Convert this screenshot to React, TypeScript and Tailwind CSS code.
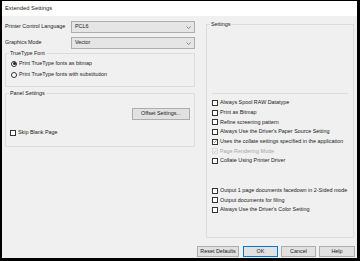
import React from "react";

const font = { fontFamily: '"Liberation Sans", Arial, sans-serif' };

function Combo({ value }: { value: string }) {
  return (
    <div className="w-[124px] h-[12px] border border-[#adadad] bg-[#e5e5e5] flex items-center justify-between pl-[3px] pr-[3px]">
      <span className="text-[5.4px] leading-none text-[#1a1a1a]">{value}</span>
      <svg width="5" height="3" viewBox="0 0 5 3" className="block">
        <polyline points="0.5,0.5 2.5,2.5 4.5,0.5" fill="none" stroke="#606060" strokeWidth="0.7" />
      </svg>
    </div>
  );
}

function Radio({ checked, label }: { checked?: boolean; label: string }) {
  return (
    <div className="h-[10px] flex items-center pl-[5px]">
      <div className="w-[6px] h-[6px] rounded-full border border-[#333] bg-white flex items-center justify-center">
        {checked && <div className="w-[3px] h-[3px] rounded-full bg-[#222]" />}
      </div>
      <span className="ml-[2px] text-[5.4px] leading-none text-[#1a1a1a]">{label}</span>
    </div>
  );
}

function Check({ checked, disabled, label, h = "h-[9.7px]" }: { checked?: boolean; disabled?: boolean; label: string; h?: string }) {
  return (
    <div className={`${h} flex items-center`}>
      <div
        className={`w-[6px] h-[6px] border flex items-center justify-center ${
          disabled ? "border-[#d8d8d8] bg-[#f0f0f0]" : "border-[#333] bg-white"
        }`}
      >
        {checked && (
          <svg width="5" height="5" viewBox="0 0 5 5" className="block">
            <polyline
              points="0.7,2.6 1.9,3.8 4.3,1.0"
              fill="none"
              stroke={disabled ? "#b0b0b0" : "#333"}
              strokeWidth="0.7"
            />
          </svg>
        )}
      </div>
      <span className={`ml-[2px] text-[5.4px] leading-none ${disabled ? "text-[#a8a8a8]" : "text-[#1a1a1a]"}`}>{label}</span>
    </div>
  );
}

function Btn({ label, w, primary }: { label: string; w: string; primary?: boolean }) {
  return (
    <div
      className={`${w} h-[11px] flex items-center justify-center bg-[#e1e1e1] border ${
        primary ? "border-[#0078d7]" : "border-[#adadad]"
      }`}
    >
      <span className="text-[5.4px] leading-none text-[#1a1a1a]">{label}</span>
    </div>
  );
}

export default function App() {
  return (
    <div
      style={font}
      className="w-[360px] h-[261px] border-t border-l-2 border-r-[3px] border-b-[3px] border-black flex flex-col bg-[#f0f0f0] overflow-hidden"
    >
      <div className="h-[15px] bg-white flex items-center pl-[3px]">
        <span className="text-[5.8px] leading-none text-[#1a1a1a]">Extended Settings</span>
      </div>
      <div className="flex-1 flex flex-col pl-[3px] pr-[2px]">
        <div className="h-[222px] flex items-start">
          {/* Left column */}
          <div className="w-[190px] flex flex-col">
            <div className="mt-[5px] h-[12px] flex items-center">
              <span className="w-[66px] text-[5.4px] leading-none text-[#1a1a1a]">Printer Control Language</span>
              <Combo value="PCL6" />
            </div>
            <div className="mt-[4px] h-[12px] flex items-center">
              <span className="w-[66px] text-[5.4px] leading-none text-[#1a1a1a]">Graphics Mode</span>
              <Combo value="Vector" />
            </div>
            <fieldset className="mt-[0.5px] h-[37px] border border-[#dcdcdc] px-0">
              <legend className="ml-[3px] px-[1px] text-[5.4px] leading-[7px] text-[#1a1a1a]">TrueType Font</legend>
              <div className="pt-[2px] flex flex-col gap-[1px]">
                <Radio checked label="Print TrueType fonts as bitmap" />
                <Radio label="Print TrueType fonts with substitution" />
              </div>
            </fieldset>
            <fieldset className="mt-[3px] h-[57.5px] border border-[#dcdcdc] px-0">
              <legend className="ml-[3px] px-[1px] text-[5.4px] leading-[7px] text-[#1a1a1a]">Panel Settings</legend>
              <div className="flex flex-col">
                <div className="mt-[11.5px] flex justify-end pr-[4px]">
                  <Btn label="Offset Settings..." w="w-[58px] h-[12px]" />
                </div>
                <div className="mt-[8.5px] pl-[4px]">
                  <Check label="Skip Blank Page" h="h-[9px]" />
                </div>
              </div>
            </fieldset>
          </div>
          {/* Right column */}
          <fieldset className="ml-[11px] mt-[4.5px] w-[148px] h-[217.5px] border border-[#dcdcdc] px-[5px]">
            <legend className="-ml-[2px] px-[1px] text-[5.4px] leading-[7px] text-[#1a1a1a]">Settings</legend>
            <div className="flex flex-col">
              <div className="mt-[65.5px] h-px bg-[#dcdcdc]" />
              <div className="mt-[4px] flex flex-col">
                <Check label="Always Spool RAW Datatype" />
                <Check label="Print as Bitmap" />
                <Check label="Refine screening pattern" />
                <Check label="Always Use the Driver's Paper Source Setting" />
                <Check checked label="Uses the collate settings specified in the application" />
                <Check checked disabled label="Page Rendering Mode" />
                <Check label="Collate Using Printer Driver" />
              </div>
              <div className="mt-[20px] flex flex-col">
                <Check label="Output 1 page documents facedown in 2-Sided mode" />
                <Check label="Output documents for filing" />
                <Check label="Always Use the Driver's Color Setting" />
              </div>
            </div>
          </fieldset>
        </div>
        <div className="mt-[8px] flex justify-end">
          <Btn label="Reset Defaults" w="w-[42px]" />
          <div className="w-[4px]" />
          <Btn label="OK" w="w-[35px]" primary />
          <div className="w-[3px]" />
          <Btn label="Cancel" w="w-[35px]" />
          <div className="w-[3px]" />
          <Btn label="Help" w="w-[36px]" />
        </div>
      </div>
    </div>
  );
}
